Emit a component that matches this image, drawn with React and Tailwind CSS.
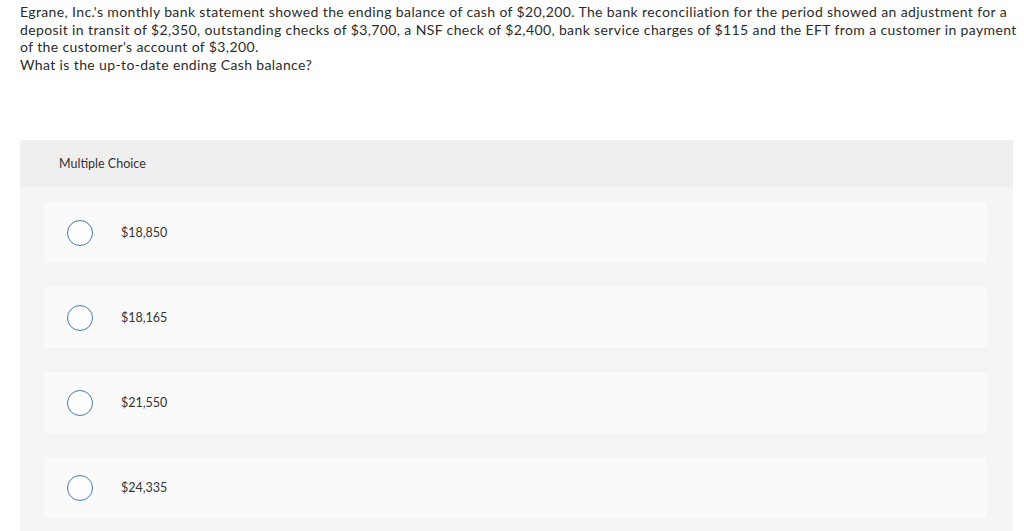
import React from 'react';

const choices = ['$18,850', '$18,165', '$21,550', '$24,335'];

const App = () => {
  return (
    <div className="min-h-[531px] bg-white font-['Lato','Liberation_Sans',sans-serif] text-[#2b2b2b]">
      <div className="px-5 pt-[3px]">
        <p className="text-[14px] leading-[17.6px] tracking-[0.38px] whitespace-nowrap">
          Egrane, Inc.'s monthly bank statement showed the ending balance of cash of $20,200. The bank reconciliation for the period showed an adjustment for a
          <br />
          deposit in transit of $2,350, outstanding checks of $3,700, a NSF check of $2,400, bank service charges of $115 and the EFT from a customer in payment
          <br />
          of the customer's account of $3,200.
          <br />
          What is the up-to-date ending Cash balance?
        </p>
      </div>

      {/* Multiple choice panel */}
      <div className="ml-5 mr-[11px] mt-[67px] rounded-t-[3px] bg-[#f5f5f5]">
        <div className="flex h-[47px] items-center rounded-t-[3px] bg-[#efefef] pl-[39px] pt-[1px]">
          <span className="text-[12.5px] text-[#333]">Multiple Choice</span>
        </div>
        <div className="flex flex-col gap-[24px] pb-6 pl-6 pr-[26px] pt-[15px]">
          {choices.map((c) => (
            <div key={c} className="flex h-[61px] items-center rounded-[3px] bg-[#fafafa] pl-[23px]">
              <span className="h-[26px] w-[26px] shrink-0 rounded-full border-[1.5px] border-[#3f7ab3] bg-white" />
              <span className="ml-[28px] text-[12.5px] text-[#333]">{c}</span>
            </div>
          ))}
        </div>
      </div>
    </div>
  );
};

export default App;
